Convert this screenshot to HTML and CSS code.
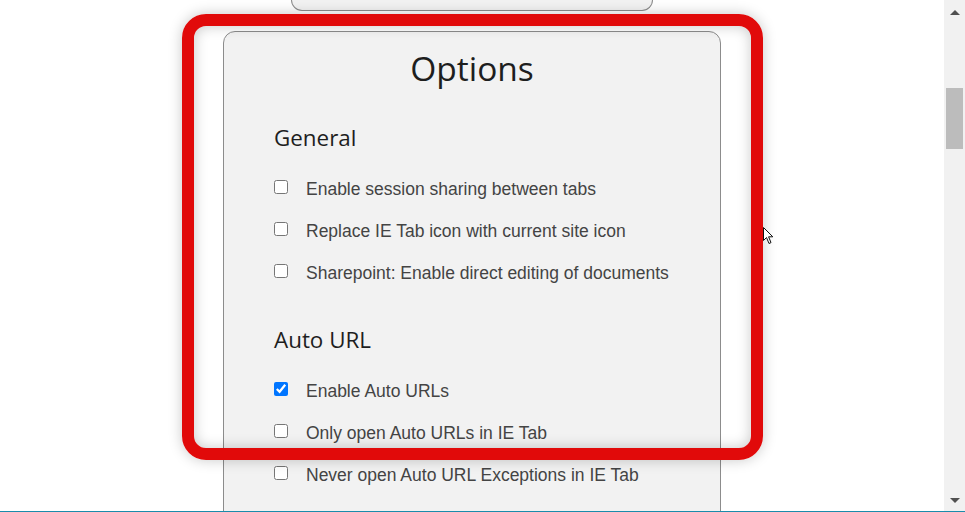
FILE: index.html
```html
<!DOCTYPE html>
<html>
<head>
<meta charset="utf-8">
<link rel="stylesheet" href="styles.css">
</head>
<body>
<div class="window">
  <div class="main">
    <div class="prev-card"></div>
    <div class="card">
      <h1 class="title">Options</h1>
      <h2 class="section">General</h2>
      <label class="row"><input type="checkbox"><span>Enable session sharing between tabs</span></label>
      <label class="row"><input type="checkbox"><span>Replace IE Tab icon with current site icon</span></label>
      <label class="row"><input type="checkbox"><span>Sharepoint: Enable direct editing of documents</span></label>
      <h2 class="section section-2">Auto URL</h2>
      <label class="row"><input type="checkbox" checked><span>Enable Auto URLs</span></label>
      <label class="row"><input type="checkbox"><span>Only open Auto URLs in IE Tab</span></label>
      <label class="row"><input type="checkbox"><span>Never open Auto URL Exceptions in IE Tab</span></label>
    </div>
  </div>
  <div class="scrollbar">
    <div class="arrow arrow-up"></div>
    <div class="thumb"></div>
    <div class="arrow arrow-down"></div>
  </div>
</div>
<div class="highlight"></div>
<svg class="cursor" width="12" height="18" viewBox="0 0 12 18">
  <path d="M0.5 0.5 L0.5 13.5 L3.5 10.5 L6 16.5 L8 15.6 L5.6 9.8 L9.8 9.8 Z" fill="#fff" stroke="#111" stroke-width="1"/>
</svg>
<div class="frame-line"></div>
</body>
</html>
```

FILE: styles.css
```css
html, body {
  margin: 0;
  padding: 0;
  width: 965px;
  height: 512px;
  overflow: hidden;
  background: #fff;
}

.window {
  display: flex;
  width: 965px;
  height: 512px;
}

.main {
  flex: 1;
  display: flex;
  flex-direction: column;
  align-items: center;
  background: #fff;
  overflow: hidden;
}

.prev-card {
  width: 362px;
  height: 11px;
  box-sizing: border-box;
  border: 1px solid #8c8c8c;
  border-top: none;
  border-radius: 0 0 12px 12px;
  background: #f2f2f2;
  flex-shrink: 0;
}

.card {
  margin-top: 20px;
  width: 498px;
  box-sizing: border-box;
  border: 1px solid #8c8c8c;
  border-radius: 12px;
  background: #f2f2f2;
  padding: 0 0 40px 50px;
  flex-shrink: 0;
}

.title {
  margin: 13px 0 0 -50px;
  text-align: center;
  font-family: "Open Sans", sans-serif;
  font-weight: 400;
  font-size: 33.5px;
  line-height: 46px;
  color: #1e1e1e;
}

.section {
  margin: 32px 0 15px 0;
  font-family: "Open Sans", sans-serif;
  font-weight: 400;
  font-size: 22.4px;
  line-height: 30px;
  color: #1e1e1e;
}

.section-2 {
  margin-top: 31px;
}

.row {
  display: flex;
  align-items: center;
  height: 42px;
  font-family: "Liberation Sans", Arial, sans-serif;
  font-size: 17.5px;
  color: #444;
}

.row input {
  margin: 0 18px 5px 0;
  width: 14px;
  height: 14px;
}

.scrollbar {
  width: 21px;
  background: #f1f1f1;
  position: relative;
  display: flex;
  flex-direction: column;
  align-items: center;
}

.thumb {
  margin-top: 73px;
  width: 17px;
  height: 61px;
  background: #bcbcbc;
}

.arrow {
  width: 0;
  height: 0;
  border-left: 5px solid transparent;
  border-right: 5px solid transparent;
}

.arrow-up {
  margin-top: 10px;
  border-bottom: 5px solid #505050;
}

.arrow-down {
  margin-top: auto;
  margin-bottom: 9px;
  border-top: 5px solid #505050;
}

.highlight {
  position: absolute;
  left: 182px;
  top: 14px;
  width: 581px;
  height: 446px;
  box-sizing: border-box;
  border: 12px solid #e10a0a;
  border-radius: 24px;
  box-shadow: 0 0 14px rgba(0, 0, 0, 0.22), inset 0 0 14px rgba(0, 0, 0, 0.22);
}

.cursor {
  position: absolute;
  left: 763px;
  top: 227px;
}

.frame-line {
  position: absolute;
  left: 0;
  bottom: 0;
  width: 965px;
  height: 1px;
  background: #1a8bab;
}
```
